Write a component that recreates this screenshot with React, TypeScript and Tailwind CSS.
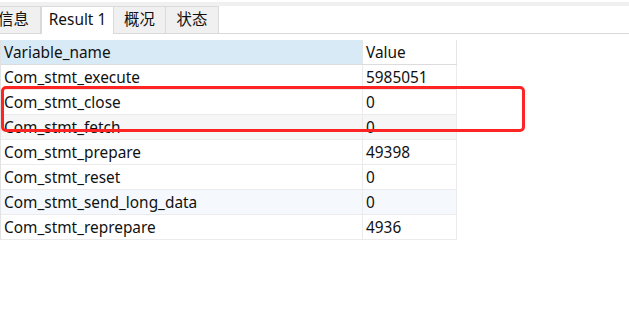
import React from "react";

const rows: { name: string; value: string; bg: string }[] = [
  { name: "Com_stmt_execute", value: "5985051", bg: "bg-white" },
  { name: "Com_stmt_close", value: "0", bg: "bg-white" },
  { name: "Com_stmt_fetch", value: "0", bg: "bg-[#f6f6f6]" },
  { name: "Com_stmt_prepare", value: "49398", bg: "bg-white" },
  { name: "Com_stmt_reset", value: "0", bg: "bg-white" },
  { name: "Com_stmt_send_long_data", value: "0", bg: "bg-[#f5f9fd]" },
  { name: "Com_stmt_reprepare", value: "4936", bg: "bg-white" },
];

export default function App() {
  return (
    <div
      className="relative w-[629px] h-[324px] bg-white overflow-hidden text-[15.4px] text-[#111]"
      style={{ fontFamily: '"Noto Sans", "Noto Sans CJK SC", sans-serif' }}
    >
      <div className="mt-[2px] h-[4px] bg-[#f0f0f0]" />
      <div className="flex items-end h-[28px] border-b border-[#d9d9d9]">
        <div className="ml-[-14px] w-[55px] h-[27px] bg-[#f0f0f0] border border-b-0 border-[#dadada] flex items-center justify-center leading-none">
          信息
        </div>
        <div className="w-[73px] h-[28px] -mb-px bg-white border border-b-0 border-[#dadada] flex items-center justify-center leading-none pb-[1px]">
          Result 1
        </div>
        <div className="w-[52px] h-[27px] bg-[#f0f0f0] border border-l-0 border-b-0 border-[#dadada] flex items-center justify-center leading-none">
          概况
        </div>
        <div className="w-[53px] h-[27px] bg-[#f0f0f0] border border-l-0 border-b-0 border-[#dadada] flex items-center justify-center leading-none">
          状态
        </div>
      </div>
      <div className="mt-[6px] w-[457px] border-l border-[#e2e2e2]">
        <div className="flex h-[25px] border-b border-[#dcdcdc]">
          <div className="w-[361px] bg-[#d9eaf7] pl-[3px] pt-[2px] flex items-center">Variable_name</div>
          <div className="w-[95px] border-l border-[#e6e6e6] border-r pl-[3px] pt-[2px] flex items-center">Value</div>
        </div>
        {rows.map((r) => (
          <div key={r.name} className={`flex h-[25px] border-b border-[#ebebeb] ${r.bg}`}>
            <div className="w-[361px] pl-[3px] pt-[2px] flex items-center">{r.name}</div>
            <div className="w-[95px] border-l border-r border-[#ebebeb] pl-[3px] pt-[2px] flex items-center">{r.value}</div>
          </div>
        ))}
      </div>
      <div className="absolute left-[1px] top-[86px] w-[524px] h-[46px] border-[3px] border-[#ff2424] rounded-[5px]" />
    </div>
  );
}
